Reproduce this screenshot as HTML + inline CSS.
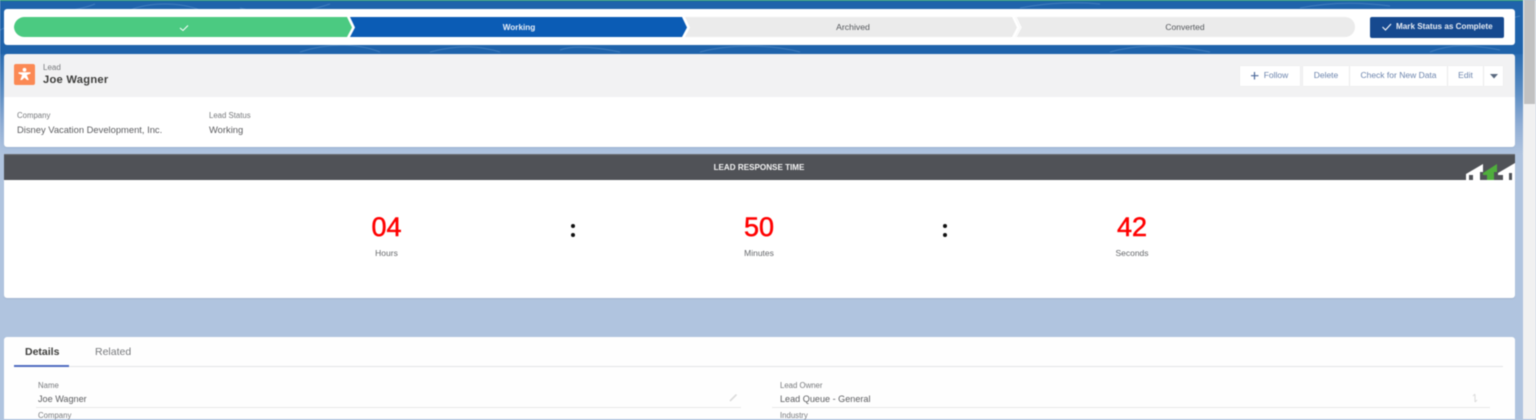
<!DOCTYPE html>
<html>
<head>
<meta charset="utf-8">
<style>
html,body{margin:0;padding:0;}
body{width:1536px;height:419px;overflow:hidden;position:relative;font-family:"Liberation Sans",sans-serif;background:#b0c4df;}
.a{position:absolute;white-space:nowrap;line-height:1;}
.box{position:absolute;background:#fff;}
.blur{position:absolute;left:0;top:0;width:1536px;height:419px;filter:blur(0.45px);}
.btn{position:absolute;top:66px;height:20px;background:#fff;box-shadow:0 0 1px #ddd;font-size:8.5px;color:#6d85ad;line-height:19px;text-align:center;}
.c{text-align:center;transform:translateX(-50%);}
.num{font-size:27px;color:#ff0000;-webkit-text-stroke:.5px #ff0000;}
</style>
</head>
<body>
<div class="blur">
  <!-- header background -->
  <div style="position:absolute;left:0;top:0;width:1523px;height:54px;background:#1f63ab;"></div>
  <div style="position:absolute;left:0;top:54px;width:1523px;height:100px;background:linear-gradient(#2a6cb1 0,#5e8fc4 40%,#8fadd4 70%,#b0c4df 100%);"></div>
  <div style="position:absolute;left:0;top:0;width:1523px;height:1px;background:#1f9b6c;"></div>
  <svg style="position:absolute;left:0;top:0;" width="1523" height="54" fill="none" stroke="#5d94cc" stroke-width="1" opacity=".55">
    <path d="M0 30C40 10 70 14 95 4M130 10c20-8 50-8 70 0M240 8c30 8 60 6 90-4M300 52c30-10 60-8 80 0M430 52c30-8 50-6 70 0M560 50c10-4 30-4 60 2M700 52c30-8 70-8 100 0M1020 8c30-6 60-6 80-4M1110 52c30-8 60-8 100 0M1300 8c30-6 60-6 90-2M1430 52c20-8 40-8 70-2M1490 30c10-8 20-12 30-14"/>
  </svg>

  <!-- scrollbar -->
  <div style="position:absolute;left:1523px;top:0;width:13px;height:419px;background:#f1f1f1;"></div>
  <div style="position:absolute;left:1524px;top:0;width:11px;height:104px;background:#c1c1c1;"></div>

  <!-- path bar -->
  <div class="box" style="left:4px;top:9px;width:1511px;height:36px;border-radius:3px;"></div>
  <svg style="position:absolute;left:0;top:0;" width="1523" height="54">
    <path d="M14 27.500A10.500 10.500 0 0 1 25 17H347L352 27.500L347 37H25A10.500 10.500 0 0 1 14 27.500Z" fill="#4bca81"/>
    <path d="M350 17H682L687 27.500L682 37H350L355 27.500Z" fill="#0b5cb5"/>
    <path d="M685 17H1012L1017 27.500L1012 37H685L690 27.500Z" fill="#ebebeb"/>
    <path d="M1015 17H1345A10 10 0 0 1 1345 37H1015L1020 27.500Z" fill="#ebebeb"/>
    <path d="M348 17L353 27.500L348 37" fill="none" stroke="#fff" stroke-width="1.200"/>
    <path d="M683 17L688 27.500L683 37" fill="none" stroke="#fff" stroke-width="1.200"/>
    <path d="M1016 17L1021 27.500L1016 37" fill="none" stroke="#fff" stroke-width="1.200"/>
    <path d="M180 28L183 30.500L188 25.500" fill="none" stroke="#fff" stroke-width="1"/>
  </svg>
  <div class="a c" style="left:519px;top:24px;font-size:8.200px;font-weight:bold;color:#e9eff8;">Working</div>
  <div class="a c" style="left:853px;top:23px;font-size:8.700px;color:#55585c;">Archived</div>
  <div class="a c" style="left:1185px;top:23px;font-size:8.500px;color:#55585c;">Converted</div>

  <div style="position:absolute;left:1370px;top:17px;width:134px;height:21px;background:#16498f;border-radius:2px;"></div>
  <svg style="position:absolute;left:1381px;top:22px;" width="12" height="10"><path d="M1.500 5L4.500 8L10 2" fill="none" stroke="#fff" stroke-width="1.100"/></svg>
  <div class="a" style="left:1396px;top:23px;font-size:8.150px;font-weight:bold;color:#e6ebf3;">Mark Status as Complete</div>

  <!-- highlights panel -->
  <div style="position:absolute;left:4px;top:54px;width:1511px;height:43px;background:#f2f2f3;border-radius:3px 3px 0 0;"></div>
  <div class="box" style="left:4px;top:97px;width:1511px;height:50px;border-radius:0 0 3px 3px;box-shadow:0 1px 1px #9fb4d0;"></div>
  <div style="position:absolute;left:14px;top:64px;width:21px;height:21px;background:#fb8954;border-radius:2px;"></div>
  <svg style="position:absolute;left:14px;top:64px;" width="21" height="21" fill="#fff">
    <circle cx="10.500" cy="5.800" r="1.900"/>
    <path d="M4.500 8.200H16.500V9.600L12.800 11L14.800 16H13L10.500 13.600L8 16H6.200L8.200 11L4.500 9.600Z"/>
  </svg>
  <div class="a" style="left:43px;top:64px;font-size:8px;color:#77797c;">Lead</div>
  <div class="a" style="left:43px;top:75px;font-size:11.200px;font-weight:bold;color:#3e3e3c;letter-spacing:.25px;">Joe Wagner</div>
  <div class="a" style="left:17px;top:112px;font-size:7.800px;color:#77797c;">Company</div>
  <div class="a" style="left:17px;top:125px;font-size:9.400px;color:#5c5d60;">Disney Vacation Development, Inc.</div>
  <div class="a" style="left:209px;top:112px;font-size:7.800px;color:#77797c;">Lead Status</div>
  <div class="a" style="left:209px;top:125px;font-size:9.400px;color:#5c5d60;">Working</div>

  <!-- action buttons -->
  <div class="btn" style="left:1240px;width:60px;"><span style="position:relative;left:6px;">Follow</span></div>
  <svg style="position:absolute;left:1250px;top:71px;" width="10" height="10"><path d="M4.500 1V8.500M1 4.700H8.500" stroke="#4f6b9c" stroke-width="1.200"/></svg>
  <div class="btn" style="left:1303px;width:46px;">Delete</div>
  <div class="btn" style="left:1350px;width:97px;">Check for New Data</div>
  <div class="btn" style="left:1448px;width:35px;">Edit</div>
  <div class="btn" style="left:1484px;width:19px;"></div>
  <svg style="position:absolute;left:1489px;top:72px;" width="10" height="8"><path d="M1 2H9L5 6.500Z" fill="#5b6a80"/></svg>

  <!-- response time card -->
  <div style="position:absolute;left:4px;top:154px;width:1511px;height:26px;background:#505257;border-top:1px solid #6a6c72;box-sizing:border-box;overflow:hidden;">
    <svg style="position:absolute;left:1462px;top:7px;" width="49" height="18">
      <path d="M0 12L17 2V10H14V18H7V13H3V18H0Z" fill="#fff"/>
      <path d="M17 11L31 2V10H28V18H21V13H17Z" fill="#4fae3c"/>
      <path d="M32 11L49 1V18H46V11H43V18H37V13H32Z" fill="#fff"/>
    </svg>
  </div>
  <div class="a c" style="left:759px;top:164px;font-size:8.100px;font-weight:bold;color:#f2f2f2;">LEAD RESPONSE TIME</div>
  <div class="box" style="left:4px;top:180px;width:1511px;height:118px;border-radius:0 0 3px 3px;box-shadow:0 1px 1px #a3b5cf;"></div>

  <div class="a c num" style="left:386.500px;top:214px;">04</div>
  <div class="a c" style="left:386.500px;top:249px;font-size:8.500px;color:#66686b;">Hours</div>
  <div class="a c num" style="left:759px;top:214px;">50</div>
  <div class="a c" style="left:759px;top:249px;font-size:8.500px;color:#66686b;">Minutes</div>
  <div class="a c num" style="left:1132px;top:214px;">42</div>
  <div class="a c" style="left:1132px;top:249px;font-size:8.500px;color:#66686b;">Seconds</div>
  <div style="position:absolute;left:571px;top:224px;width:4px;height:4px;border-radius:50%;background:#111;"></div>
  <div style="position:absolute;left:571px;top:233px;width:4px;height:4px;border-radius:50%;background:#111;"></div>
  <div style="position:absolute;left:943px;top:224px;width:4px;height:4px;border-radius:50%;background:#111;"></div>
  <div style="position:absolute;left:943px;top:233px;width:4px;height:4px;border-radius:50%;background:#111;"></div>

  <!-- details card -->
  <div class="box" style="left:4px;top:337px;width:1511px;height:82px;border-radius:3px 3px 0 0;background:#fefefe;"></div>
  <div class="a" style="left:25px;top:347px;font-size:10.500px;font-weight:bold;color:#3e3e3c;">Details</div>
  <div class="a" style="left:95px;top:347px;font-size:10.500px;color:#77797c;">Related</div>
  <div style="position:absolute;left:14px;top:366px;width:1489px;height:1px;background:#e3e4e6;"></div>
  <div style="position:absolute;left:14px;top:365px;width:55px;height:2px;background:#4f6cc0;"></div>

  <div class="a" style="left:38px;top:382px;font-size:7.800px;color:#77797c;">Name</div>
  <div class="a" style="left:38px;top:395px;font-size:9.100px;color:#5c5d60;">Joe Wagner</div>
  <div style="position:absolute;left:36px;top:407px;width:705px;height:1px;background:#e8e8e8;"></div>
  <div class="a" style="left:38px;top:412px;font-size:7.800px;color:#77797c;">Company</div>
  <svg style="position:absolute;left:728px;top:392px;" width="11" height="11"><path d="M2 9L8.500 2.500" stroke="#d8d8d8" stroke-width="1.500"/></svg>

  <div class="a" style="left:780px;top:382px;font-size:7.800px;color:#77797c;">Lead Owner</div>
  <div class="a" style="left:780px;top:395px;font-size:9.100px;color:#5c5d60;">Lead Queue - General</div>
  <div style="position:absolute;left:772px;top:407px;width:718px;height:1px;background:#e8e8e8;"></div>
  <div class="a" style="left:780px;top:412px;font-size:7.800px;color:#77797c;">Industry</div>
  <svg style="position:absolute;left:1470px;top:393px;" width="11" height="11"><path d="M5 1.500V9M3 3L5 1M7 7L5 9" fill="none" stroke="#dcdcdc" stroke-width="1"/></svg>
</div>
</body>
</html>
